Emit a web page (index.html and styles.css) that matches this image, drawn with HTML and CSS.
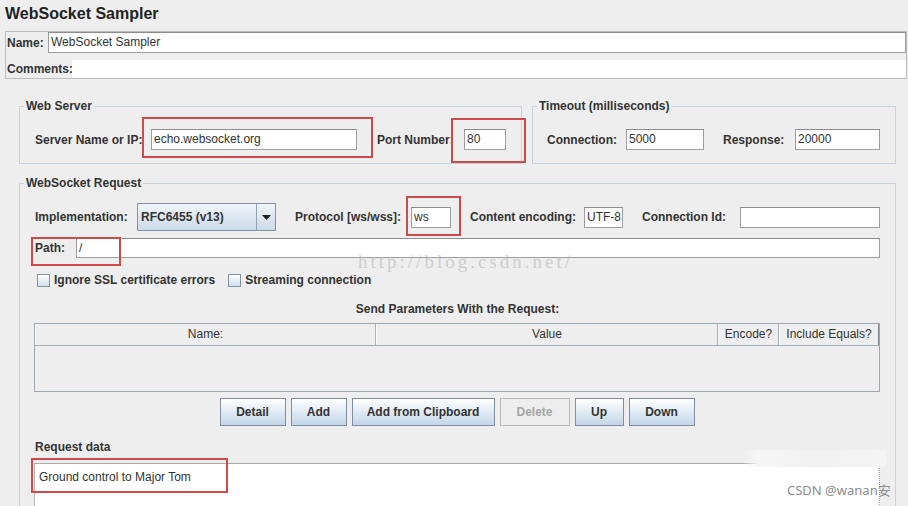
FILE: index.html
```html
<!DOCTYPE html>
<html>
<head>
<meta charset="utf-8">
<link rel="stylesheet" href="styles.css">
</head>
<body>
<div class="page">
  <h1 class="title">WebSocket Sampler</h1>

  <div class="namebox">
    <div class="nrow">
      <span class="lbl lbl-name">Name:</span>
      <div class="tf tf-name">WebSocket Sampler</div>
    </div>
    <div class="nrow crow">
      <span class="lbl lbl-comments">Comments:</span>
      <div class="tf-comments"></div>
    </div>
  </div>

  <div class="toprow">
    <fieldset class="fs fs-web">
      <legend>Web Server</legend>
      <div class="fs-body web-body row">
        <span class="lbl w116">Server Name or IP:</span>
        <div class="tf w206">echo.websocket.org</div>
        <span class="lbl w87 ml20">Port Number:</span>
        <div class="tf w42">80</div>
      </div>
    </fieldset>
    <fieldset class="fs fs-timeout">
      <legend>Timeout (milliseconds)</legend>
      <div class="fs-body timeout-body row">
        <span class="lbl w79">Connection:</span>
        <div class="tf w78">5000</div>
        <span class="lbl w72 ml19">Response:</span>
        <div class="tf w85">20000</div>
      </div>
    </fieldset>
  </div>

  <fieldset class="fs fs-req">
    <legend>WebSocket Request</legend>
    <div class="req-body">
      <div class="row impl-row">
        <span class="lbl w102">Implementation:</span>
        <div class="combo">
          <span class="combo-text">RFC6455 (v13)</span>
          <span class="combo-btn">
            <svg width="9" height="5" viewBox="0 0 9 5"><path d="M0 0H9L4.5 5Z" fill="#222"/></svg>
          </span>
        </div>
        <span class="lbl w116 ml19">Protocol [ws/wss]:</span>
        <div class="tf w40">ws</div>
        <span class="lbl w114 ml19">Content encoding:</span>
        <div class="tf w39">UTF-8</div>
        <span class="lbl w98 ml19">Connection Id:</span>
        <div class="tf w140"></div>
      </div>

      <div class="row path-row">
        <span class="lbl w41">Path:</span>
        <div class="tf tf-path">/</div>
      </div>

      <div class="row cb-row">
        <span class="cb"></span><span class="lbl cb-lbl">Ignore SSL certificate errors</span>
        <span class="cb ml13"></span><span class="lbl cb-lbl">Streaming connection</span>
      </div>

      <div class="params-title">Send Parameters With the Request:</div>

      <div class="tbl">
        <div class="thead">
          <div class="th c1">Name:</div>
          <div class="th c2">Value</div>
          <div class="th c3">Encode?</div>
          <div class="th c4">Include Equals?</div>
        </div>
      </div>

      <div class="btns">
        <button class="btn w66">Detail</button>
        <button class="btn w56">Add</button>
        <button class="btn w143">Add from Clipboard</button>
        <button class="btn w70 disabled">Delete</button>
        <button class="btn w49">Up</button>
        <button class="btn w66">Down</button>
      </div>

      <div class="reqdata-title">Request data</div>
      <div class="reqdata">Ground control to Major Tom</div>
    </div>
  </fieldset>

  <div class="redbox rb1"></div>
  <div class="redbox rb2"></div>
  <div class="redbox rb3"></div>
  <div class="redbox rb4"></div>
  <div class="redbox rb5"></div>

  <div class="wm">http://blog.csdn.net/</div>
  <div class="blurpatch"></div>
  <div class="csdn">CSDN @wanan安</div>
</div>
</body>
</html>
```

FILE: styles.css
```css
* { box-sizing: border-box; }
html, body { margin: 0; padding: 0; }
body {
  background: #eeeeee;
  font-family: "Liberation Sans", Arial, sans-serif;
  font-size: 12px;
  color: #333;
  width: 908px;
  height: 506px;
  overflow: hidden;
}
.page { position: relative; width: 908px; height: 506px; overflow: hidden; }

.title {
  margin: 0 0 6px 0;
  padding: 3px 0 0 5px;
  font-size: 16px;
  line-height: 22px;
  font-weight: bold;
  color: #222;
}

.lbl { font-weight: bold; color: #333; white-space: nowrap; line-height: 14px; flex: none; }

.tf {
  height: 21px;
  border: 1px solid #9e9e9e;
  border-top-color: #8c8c8c;
  background: #fff;
  padding: 0 2px;
  line-height: 19px;
  white-space: nowrap;
  overflow: hidden;
  color: #333;
  flex: none;
}

.namebox {
  margin: 0 1px 0 5px;
  border: 1px solid #bcbcbc;
  height: 48px;
}
.nrow { display: flex; align-items: center; }
.lbl-name { width: 42px; padding-left: 1px; }
.lbl-comments { width: 66px; padding-left: 1px; }
.crow { margin-top: 7px; }
.tf.tf-name { flex: 1 1 auto; }
.tf-comments { flex: 1 1 auto; height: 18px; background: #fff; }

.row { display: flex; align-items: center; }

.toprow { display: flex; gap: 10px; margin: 20px 0 0 19px; }

.fs {
  margin: 0;
  border: 1px solid #c6d3df;
  padding: 0 0 0 4px;
  min-width: 0;
}
.fs legend {
  padding: 0 2px;
  font-weight: bold;
  line-height: 14px;
  color: #333;
}
.fs-web { width: 503px; }
.fs-timeout { width: 364px; }
.fs-body { padding: 16px 0 13px 0; }
.web-body { padding-left: 11px; }
.timeout-body { padding-left: 10px; }

.w116 { width: 116px; }
.w206 { width: 206px; }
.w87 { width: 87px; }
.w42 { width: 42px; }
.w79 { width: 79px; }
.w78 { width: 78px; }
.w72 { width: 72px; }
.w85 { width: 85px; }
.w102 { width: 102px; }
.w40 { width: 40px; }
.w114 { width: 114px; }
.w39 { width: 39px; }
.w98 { width: 98px; }
.w140 { width: 140px; }
.w41 { width: 41px; }
.ml20 { margin-left: 20px; }
.ml19 { margin-left: 19px; }
.ml13 { margin-left: 13px; }

.fs-req { width: 877px; margin: 12px 0 0 19px; }
.req-body { padding: 13px 15px 0 11px; }

.impl-row { height: 28px; }
.combo {
  width: 139px;
  height: 28px;
  border: 1px solid #7f93aa;
  background: linear-gradient(to bottom, #f2f6fa 0%, #dfe8f1 45%, #cddbe9 100%);
  display: flex;
  align-items: stretch;
  flex: none;
}
.combo-text {
  flex: 1;
  padding-left: 3px;
  font-weight: bold;
  line-height: 26px;
  color: #333;
}
.combo-btn {
  width: 19px;
  border-left: 1px solid #8fa2b7;
  display: flex;
  align-items: center;
  justify-content: center;
}

.path-row { margin-top: 7px; }
.tf.tf-path { flex: 1 1 auto; height: 20px; line-height: 18px; }

.cb-row { margin-top: 15px; height: 14px; }
.cb {
  width: 13px;
  height: 13px;
  margin-left: 2px;
  border: 1px solid #8293a6;
  background: linear-gradient(to bottom, #ffffff, #d3dfeb);
  flex: none;
}
.cb.ml13 { margin-left: 13px; }
.cb-lbl { margin-left: 4px; }

.params-title {
  margin-top: 15px;
  line-height: 14px;
  text-align: center;
  font-weight: bold;
}

.tbl {
  margin: 7px 0 0 -1px;
  height: 69px;
  border: 1px solid #9ea7b1;
  background: #eeeeee;
}
.thead {
  display: flex;
  height: 22px;
  border-bottom: 1px solid #a4adb6;
}
.th {
  text-align: center;
  line-height: 21px;
  color: #333;
  border-right: 1px solid #a9b1b9;
  border-left: 1px solid #fafafa;
}
.c1 { width: 341px; }
.c2 { width: 342px; }
.c3 { width: 61px; }
.c4 { flex: 1; border-right-color: #7d868f; }

.btns {
  display: flex;
  justify-content: center;
  gap: 5px;
  margin: 6px 0 0 -1px;
}
.btn {
  height: 28px;
  margin: 0;
  padding: 0;
  border: 1px solid #7f8fa0;
  background: linear-gradient(to bottom, #ffffff 0%, #e6eef6 40%, #c3d5e8 100%);
  font-family: "Liberation Sans", Arial, sans-serif;
  font-size: 12px;
  font-weight: bold;
  color: #333;
}
.btn.disabled {
  background: #eeeeee;
  border-color: #b8b8b8;
  color: #a6a6a6;
}
.w66 { width: 66px; }
.w56 { width: 56px; }
.w143 { width: 143px; }
.w70 { width: 70px; }
.w49 { width: 49px; }

.reqdata-title {
  margin-top: 14px;
  line-height: 14px;
  font-weight: bold;
}
.reqdata {
  margin: 9px 0 0 -1px;
  height: 120px;
  background: #fff;
  border-top: 1px solid #a9a9a9;
  border-left: 1px solid #b5b5b5;
  border-right: 1px dotted #9a9a9a;
  padding: 6px 4px;
  line-height: 14px;
  color: #333;
}

.redbox {
  position: absolute;
  border: 2px solid #d04a4a;
}
.rb1 { left: 142px; top: 117px; width: 231px; height: 41px; }
.rb2 { left: 451px; top: 118px; width: 75px; height: 45px; }
.rb3 { left: 406px; top: 196px; width: 55px; height: 40px; }
.rb4 { left: 31px; top: 237px; width: 90px; height: 29px; }
.rb5 { left: 31px; top: 458px; width: 197px; height: 35px; }

.wm {
  position: absolute;
  left: 358px;
  top: 251px;
  font-family: "Liberation Serif", "Times New Roman", serif;
  font-size: 19px;
  line-height: 22px;
  letter-spacing: 3px;
  color: rgba(170, 170, 170, 0.5);
  white-space: nowrap;
}
.blurpatch {
  position: absolute;
  left: 742px;
  top: 450px;
  width: 144px;
  height: 17px;
  background: linear-gradient(to right, rgba(250,250,250,0), #f6f6f6 12%, #f1f1f1 50%, #f4f4f4 100%);
}
.csdn {
  position: absolute;
  left: 787px;
  top: 482px;
  font-family: "Noto Sans", "Noto Sans CJK SC", sans-serif;
  font-size: 13px;
  line-height: 16px;
  color: #8c8c8c;
  white-space: nowrap;
}
```
